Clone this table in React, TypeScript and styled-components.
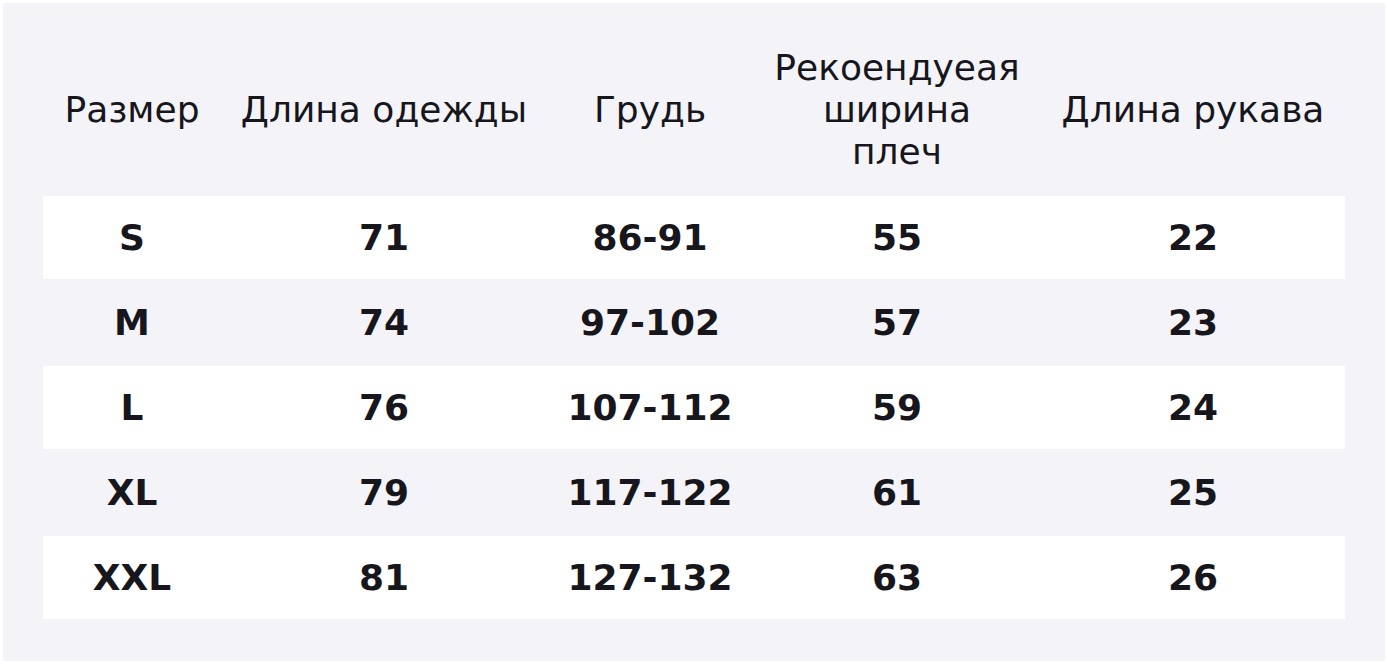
import React from "react";
import styled, { createGlobalStyle } from "styled-components";

const Global = createGlobalStyle`
  body {
    margin: 3px;
    background: #ffffff;
    font-family: "DejaVu Sans", "Liberation Sans", sans-serif;
  }
`;

const Sheet = styled.section`
  background: #f4f4f8;
  padding: 40px 40px 42px;
  height: 658px;
  box-sizing: border-box;
`;

const Table = styled.table`
  width: 100%;
  border-collapse: separate;
  border-spacing: 0;
  table-layout: fixed;
  color: #16161c;
  font-size: 36px;
`;

const Head = styled.th<{ $w: number }>`
  width: ${(p) => p.$w}px;
  font-weight: normal;
  line-height: 42px;
  padding: 4px 0 22px;
  text-align: center;
  vertical-align: middle;
`;

const Row = styled.tr<{ $light: boolean }>`
  background: ${(p) => (p.$light ? "#ffffff" : "transparent")};
`;

const Cell = styled.td`
  font-weight: bold;
  text-align: center;
  line-height: 43px;
  padding: 20px 0;
  border-top: 1px solid #f4f4f8;
  border-bottom: 1px solid #f4f4f8;
`;

const columns = [
  { title: "Размер", w: 178 },
  { title: "Длина одежды", w: 326 },
  { title: "Грудь", w: 206 },
  { title: "Рекоендуеая ширина плеч", w: 288 },
  { title: "Длина рукава", w: 304 },
];

const rows = [
  ["S", "71", "86-91", "55", "22"],
  ["M", "74", "97-102", "57", "23"],
  ["L", "76", "107-112", "59", "24"],
  ["XL", "79", "117-122", "61", "25"],
  ["XXL", "81", "127-132", "63", "26"],
];

export default function App() {
  return (
    <>
      <Global />
      <Sheet>
        <Table>
          <thead>
            <tr>
              {columns.map((c) => (
                <Head key={c.title} $w={c.w}>
                  {c.title === "Рекоендуеая ширина плеч" ? (
                    <>
                      Рекоендуеая
                      <br />
                      ширина
                      <br />
                      плеч
                    </>
                  ) : (
                    c.title
                  )}
                </Head>
              ))}
            </tr>
          </thead>
          <tbody>
            {rows.map((r, i) => (
              <Row key={r[0]} $light={i % 2 === 0}>
                {r.map((v, j) => (
                  <Cell key={j}>{v}</Cell>
                ))}
              </Row>
            ))}
          </tbody>
        </Table>
      </Sheet>
    </>
  );
}
